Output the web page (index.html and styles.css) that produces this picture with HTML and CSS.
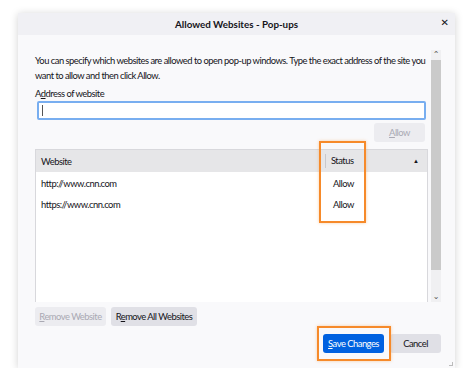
FILE: index.html
```html
<!DOCTYPE html>
<html>
<head>
<meta charset="utf-8">
<link rel="stylesheet" href="styles.css">
</head>
<body>
<div class="dialog">
  <div class="titlebar">
    <span class="title">Allowed Websites - Pop-ups</span>
    <span class="close">✕</span>
  </div>
  <div class="main">
    <div class="content">
      <p class="intro">You can specify which websites are allowed to open pop-up windows. Type the exact address of the site you want to allow and then click Allow.</p>
      <label class="label">A<u>d</u>dress of website</label>
      <div class="input"><span class="caret"></span></div>
      <div class="allow-row"><button class="btn disabled"><u>A</u>llow</button></div>
      <div class="table">
        <div class="thead">
          <div class="col-site">Website</div>
          <div class="col-status">Status <span class="sort">▲</span></div>
        </div>
        <div class="row"><div class="col-site">http://www.cnn.com</div><div class="col-status">Allow</div></div>
        <div class="row"><div class="col-site">https://www.cnn.com</div><div class="col-status">Allow</div></div>
      </div>
    </div>
    <div class="scrollbar">
      <span class="arrow up">&#8963;</span>
      <div class="thumb"></div>
      <span class="arrow down">&#8964;</span>
    </div>
  </div>
  <div class="remove-row">
    <button class="btn disabled"><u>R</u>emove Website</button>
    <button class="btn">R<u>e</u>move All Websites</button>
  </div>
  <div class="footer">
    <button class="btn primary"><u>S</u>ave Changes</button>
    <button class="btn">Cancel</button>
  </div>
  <div class="highlight hl-status"></div>
  <div class="highlight hl-save"></div>
  <span class="grip"></span>
</div>
</body>
</html>
```
FILE: styles.css
```css
* { box-sizing: border-box; }
html, body { margin: 0; background: #ffffff; }
body {
  padding: 13px 0 0 18px;
  font-family: "Lato", "Open Sans", sans-serif;
  font-size: 9.4px;
  letter-spacing: -0.5px;
  color: #15141a;
}
u { text-decoration: underline; text-underline-offset: 1px; }
.dialog {
  position: relative;
  width: 437px;
  height: 355px;
  background: #f9f9fb;
  box-shadow: 0 1px 8px rgba(0,0,0,0.18);
  display: flex;
  flex-direction: column;
}
.titlebar {
  height: 22px;
  background: #f0f0f4;
  display: flex;
  align-items: center;
  justify-content: center;
  position: relative;
}
.title { font-weight: 700; font-size: 9.8px; letter-spacing: 0; }
.close {
  position: absolute;
  right: 6px;
  top: 4px;
  font-family: "DejaVu Sans", sans-serif;
  font-size: 10px;
  font-weight: 700;
  letter-spacing: 0;
}
.main {
  display: flex;
  height: 252px;
  margin-top: 15px;
  padding-left: 17px;
}
.content {
  width: 393px;
  display: flex;
  flex-direction: column;
}
.intro {
  margin: 3px 0 0;
  line-height: 15px;
  width: 396px;
}
.label { display: block; margin-top: 3px; line-height: 15px; }
.input {
  margin: 0 2px;
  height: 19px;
  border: 2px solid #78aef0;
  border-radius: 2px;
  background: #fff;
  display: flex;
  align-items: center;
  padding-left: 3px;
}
.caret { width: 1px; height: 11px; background: #555; }
.allow-row { display: flex; justify-content: flex-end; margin-top: 3px; padding-right: 3px; }
.btn {
  font-family: inherit;
  font-size: inherit;
  letter-spacing: inherit;
  border: none;
  border-radius: 3px;
  background: #e0e0e6;
  color: #15141a;
  height: 19px;
  padding: 0;
  white-space: nowrap;
}
.btn.disabled { background: #ececf0; color: #a9a9b3; }
.allow-row .btn { width: 51px; }
.table {
  margin-top: 7px;
  flex: 1;
  background: #fff;
  border: 1px solid #d8d8dc;
  border-bottom: none;
}
.thead {
  height: 22px;
  background: #e6e6e8;
  display: flex;
  align-items: center;
}
.row { height: 21px; display: flex; align-items: center; padding-top: 1px; }
.col-site { width: 289px; padding-left: 5px; }
.col-status { flex: 1; padding-left: 8px; position: relative; }
.thead .col-status { border-left: 1px solid #c8c8cc; padding-left: 5px; height: 14px; line-height: 14px; }
.sort { position: absolute; right: 8px; top: 0; font-size: 6px; letter-spacing: 0; }
.scrollbar {
  width: 10px;
  margin-left: 3px;
  background: #f0f0f2;
  display: flex;
  flex-direction: column;
  align-items: center;
}
.arrow { font-family: "DejaVu Sans", sans-serif; font-size: 8px; line-height: 10px; height: 10px; color: #555; letter-spacing: 0; }
.thumb { width: 10px; flex: 0 0 210px; background: #cacaca; }
.down { margin-top: auto; }
.remove-row { display: flex; gap: 5px; padding-left: 17px; margin-top: 5px; }
.remove-row .btn:first-child { width: 71px; }
.remove-row .btn:last-child { width: 86px; }
.footer { display: flex; justify-content: flex-end; gap: 6px; padding-right: 14px; margin-top: 8px; }
.btn.primary { background: #0061e0; color: #fff; width: 61px; }
.footer .btn:last-child { width: 51px; }
.highlight {
  position: absolute;
  border: 2px solid #f68a2a;
  box-shadow: 0 0 3px rgba(246,138,42,0.4);
}
.hl-status { left: 301px; top: 128px; width: 47px; height: 82px; }
.hl-save { left: 299px; top: 313px; width: 74px; height: 35px; }
.grip {
  position: absolute;
  right: 2px; bottom: 2px;
  width: 4px; height: 4px;
  border-right: 1px solid #bbb; border-bottom: 1px solid #bbb;
}
```
